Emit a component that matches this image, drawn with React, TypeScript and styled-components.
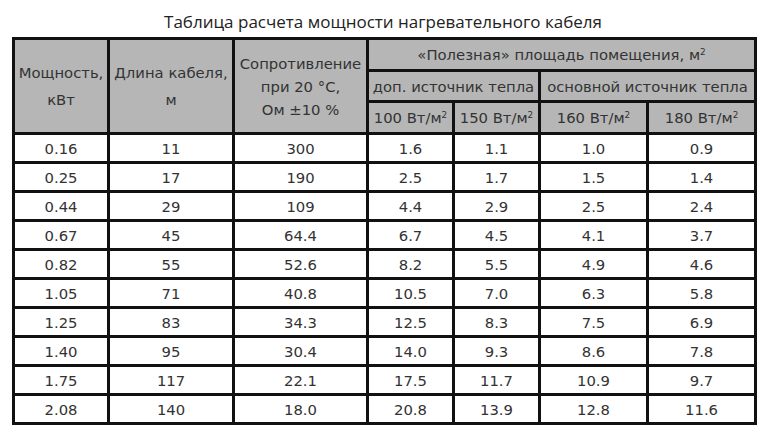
import React from "react";
import styled, { createGlobalStyle } from "styled-components";

const Global = createGlobalStyle`
  html, body { margin: 0; padding: 0; background: #ffffff; }
  body { font-family: "DejaVu Sans", Tahoma, sans-serif; color: #333; }
`;

const Page = styled.div`
  width: 768px;
  height: 437px;
  padding: 10px 0 0 12px;
  box-sizing: border-box;
  display: flex;
  flex-direction: column;
  align-items: flex-start;
`;

const Title = styled.div`
  width: 742px;
  text-align: center;
  font-family: "Open Sans", "DejaVu Sans", sans-serif;
  font-size: 17px;
  line-height: 24px;
  color: #222;
  margin-bottom: 3px;
`;

const Table = styled.table`
  border-collapse: collapse;
  table-layout: fixed;
  width: 742px;
  border: 3px solid #111;
`;

const HeadCell = styled.th<{ $h?: number }>`
  background: #b6b6b6;
  border: 3px solid #111;
  font-weight: normal;
  font-size: 14.8px;
  line-height: 23px;
  color: #333;
  text-align: center;
  vertical-align: middle;
  padding: 0;
  white-space: nowrap;
  overflow: hidden;
  height: ${(p) => (p.$h ? `${p.$h}px` : "auto")};
`;

const TallHead = styled(HeadCell)`
  line-height: 27px;
`;

const Cell = styled.td`
  border: 3px solid #111;
  font-size: 14.8px;
  color: #333;
  text-align: center;
  vertical-align: middle;
  padding: 0;
  height: 26px;
`;

const Sup = styled.sup`
  font-size: 0.6em;
  vertical-align: 0.6em;
  line-height: 0;
`;

const rows: string[][] = [
  ["0.16", "11", "300", "1.6", "1.1", "1.0", "0.9"],
  ["0.25", "17", "190", "2.5", "1.7", "1.5", "1.4"],
  ["0.44", "29", "109", "4.4", "2.9", "2.5", "2.4"],
  ["0.67", "45", "64.4", "6.7", "4.5", "4.1", "3.7"],
  ["0.82", "55", "52.6", "8.2", "5.5", "4.9", "4.6"],
  ["1.05", "71", "40.8", "10.5", "7.0", "6.3", "5.8"],
  ["1.25", "83", "34.3", "12.5", "8.3", "7.5", "6.9"],
  ["1.40", "95", "30.4", "14.0", "9.3", "8.6", "7.8"],
  ["1.75", "117", "22.1", "17.5", "11.7", "10.9", "9.7"],
  ["2.08", "140", "18.0", "20.8", "13.9", "12.8", "11.6"],
];

const widths = [95, 125, 134, 86, 86, 108, 108];

export default function App() {
  return (
    <>
      <Global />
      <Page>
        <Title>Таблица расчета мощности нагревательного кабеля</Title>
        <Table>
          <colgroup>
            {widths.map((w, i) => (
              <col key={i} style={{ width: w }} />
            ))}
          </colgroup>
          <thead>
            <tr>
              <TallHead rowSpan={3}>
                Мощность,
                <br />
                кВт
              </TallHead>
              <TallHead rowSpan={3}>
                Длина кабеля,
                <br />м
              </TallHead>
              <HeadCell rowSpan={3}>
                Сопротивление
                <br />
                при 20 °С,
                <br />
                Ом ±10 %
              </HeadCell>
              <HeadCell colSpan={4} $h={29}>
                «Полезная» площадь помещения, м<Sup>2</Sup>
              </HeadCell>
            </tr>
            <tr>
              <HeadCell colSpan={2} $h={28}>
                доп. источник тепла
              </HeadCell>
              <HeadCell colSpan={2} $h={28}>
                основной источник тепла
              </HeadCell>
            </tr>
            <tr>
              <HeadCell $h={29}>
                100 Вт/м<Sup>2</Sup>
              </HeadCell>
              <HeadCell $h={29}>
                150 Вт/м<Sup>2</Sup>
              </HeadCell>
              <HeadCell $h={29}>
                160 Вт/м<Sup>2</Sup>
              </HeadCell>
              <HeadCell $h={29}>
                180 Вт/м<Sup>2</Sup>
              </HeadCell>
            </tr>
          </thead>
          <tbody>
            {rows.map((r, i) => (
              <tr key={i}>
                {r.map((v, j) => (
                  <Cell key={j}>{v}</Cell>
                ))}
              </tr>
            ))}
          </tbody>
        </Table>
      </Page>
    </>
  );
}
